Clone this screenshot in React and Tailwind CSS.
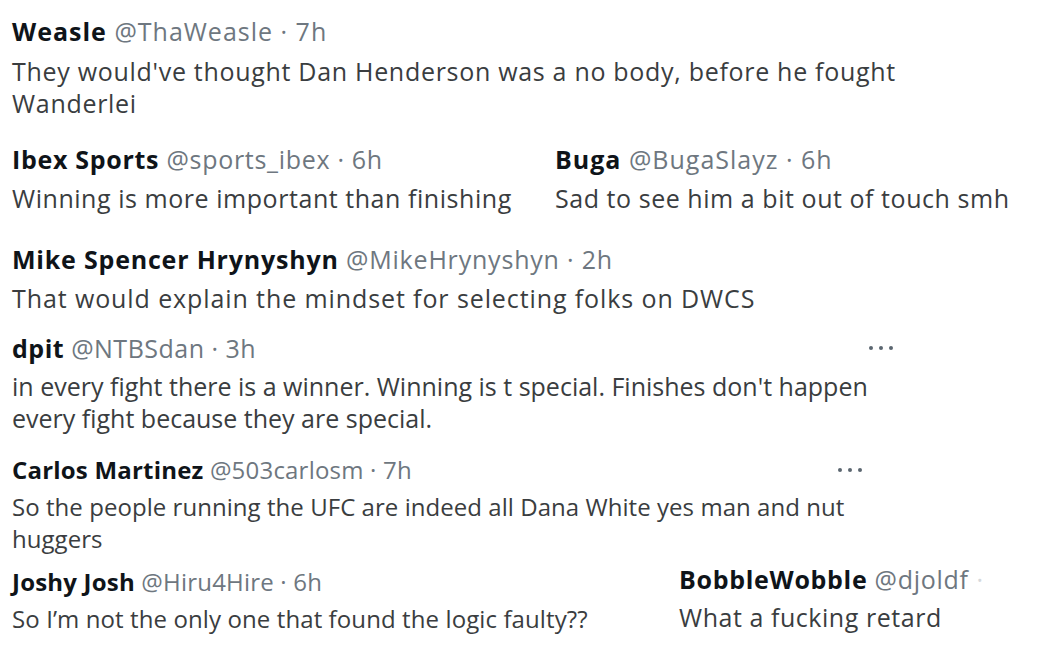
const font = { fontFamily: '"Open Sans", "Noto Sans", sans-serif' };

const Dots = () => (
  <div className="flex items-center gap-[6px]">
    <span className="w-[4px] h-[4px] rounded-full bg-[#5b6670]" />
    <span className="w-[4px] h-[4px] rounded-full bg-[#5b6670]" />
    <span className="w-[4px] h-[4px] rounded-full bg-[#5b6670]" />
  </div>
);

const Header = ({ name, handle, time, extra, head }) => (
  <div className={`leading-[36px] whitespace-nowrap ${head}`}>
    <span className="font-bold text-[#0f1419]">{name}</span>{" "}
    <span className="text-[#6e7780]">
      {handle}
      {time ? ` · ${time}` : ""}
    </span>
    {extra}
  </div>
);

const Tweet = ({
  name,
  handle,
  time,
  children,
  className = "",
  gap = "mt-[4px]",
  head = "text-[25px] tracking-[0.5px]",
  body = "text-[25px] tracking-[0.55px]",
  menu,
  width,
  extra,
}) => (
  <div className={className}>
    {menu ? (
      <div className={`flex items-center justify-between ${width}`}>
        <Header name={name} handle={handle} time={time} head={head} />
        <Dots />
      </div>
    ) : (
      <Header name={name} handle={handle} time={time} extra={extra} head={head} />
    )}
    <p className={`${gap} ${body} leading-[32px] text-[#3a3d40]`}>{children}</p>
  </div>
);

export default function App() {
  return (
    <div className="w-[1045px] h-[653px] bg-white pl-[12px] overflow-hidden" style={font}>
      <Tweet
        name="Weasle"
        handle="@ThaWeasle"
        time="7h"
        className="pt-[13px]"
        gap="mt-[6px]"
        head="text-[25px] tracking-[1px]"
        body="text-[25px] tracking-[0.7px]"
      >
        They would've thought Dan Henderson was a no body, before he fought
        <br />
        Wanderlei
      </Tweet>

      <div className="flex mt-[22px]">
        <Tweet
          name="Ibex Sports"
          handle="@sports_ibex"
          time="6h"
          className="w-[543px]"
          gap="mt-[5px]"
          head="text-[25px] tracking-[0.7px]"
        >
          Winning is more important than finishing
        </Tweet>
        <Tweet
          name="Buga"
          handle="@BugaSlayz"
          time="6h"
          gap="mt-[5px]"
          head="text-[25px] tracking-[1px]"
        >
          Sad to see him a bit out of touch smh
        </Tweet>
      </div>

      <Tweet
        name="Mike Spencer Hrynyshyn"
        handle="@MikeHrynyshyn"
        time="2h"
        className="mt-[27px]"
        gap="mt-[5px]"
        head="text-[25px] tracking-[0.8px]"
        body="text-[25px] tracking-[0.9px]"
      >
        That would explain the mindset for selecting folks on DWCS
      </Tweet>

      <Tweet
        name="dpit"
        handle="@NTBSdan"
        time="3h"
        className="mt-[16px]"
        gap="mt-[4px]"
        body="text-[25px] tracking-[0px]"
        menu
        width="w-[881px]"
      >
        in every fight there is a winner. Winning is t special. Finishes don't happen
        <br />
        every fight because they are special.
      </Tweet>

      <Tweet
        name="Carlos Martinez"
        handle="@503carlosm"
        time="7h"
        className="mt-[18px]"
        gap="mt-[3px]"
        head="text-[24px] tracking-[0.2px]"
        body="text-[24px] tracking-[0.05px]"
        menu
        width="w-[850px]"
      >
        So the people running the UFC are indeed all Dana White yes man and nut
        <br />
        huggers
      </Tweet>

      <div className="flex mt-[9px]">
        <Tweet
          name="Joshy Josh"
          handle="@Hiru4Hire"
          time="6h"
          className="w-[667px]"
          gap="mt-[3px]"
          head="text-[24px] tracking-[0.2px]"
          body="text-[24px] tracking-[0.1px]"
        >
          So I’m not the only one that found the logic faulty??
        </Tweet>
        <Tweet
          name="BobbleWobble"
          handle="@djoldf"
          className="-mt-[3px]"
          gap="mt-[4px]"
          head="text-[25px] tracking-[0.7px]"
          extra={<span className="ml-[8px] text-[#d5d9dc]">·</span>}
        >
          What a fucking retard
        </Tweet>
      </div>
    </div>
  );
}
